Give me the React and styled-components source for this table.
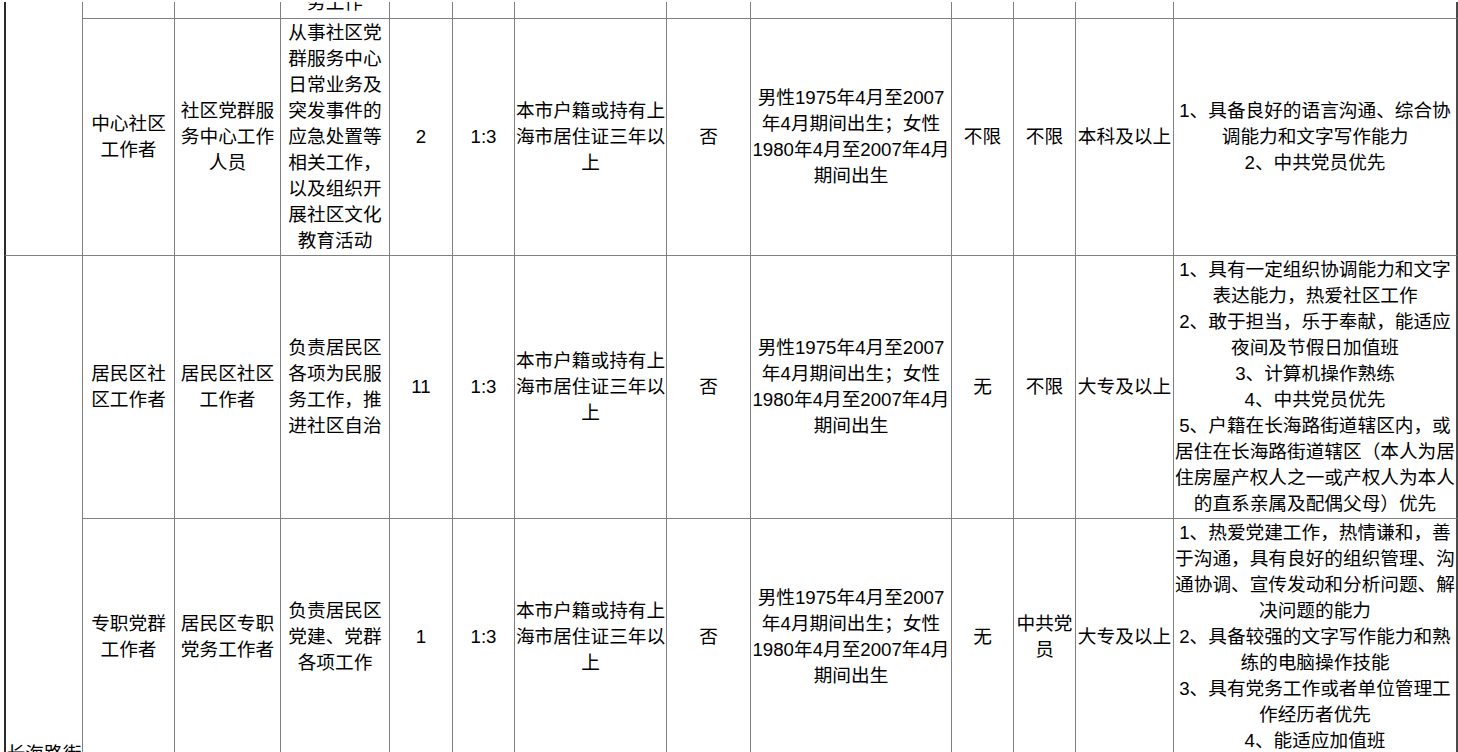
import React from 'react'
import styled, { createGlobalStyle } from 'styled-components'

const GlobalStyle = createGlobalStyle`
  html, body {
    margin: 0;
    padding: 0;
    background: #fff;
  }
  body {
    font-family: "Liberation Sans", "Noto Sans CJK SC", sans-serif;
    color: #000;
  }
`

const Viewport = styled.div`
  height: 752px;
  overflow: hidden;
  padding: 2px 0 0 4px;
  box-sizing: border-box;
`

const Table = styled.table`
  width: 1454px;
  table-layout: fixed;
  border-collapse: separate;
  border-spacing: 0;
  font-size: 14pt;
  line-height: 26px;
`

const Cell = styled.td`
  padding: ${p => (p.$flush ? '0' : '1px 0')};
  text-align: center;
  vertical-align: middle;
  border-left: ${p => (p.$first ? '2px solid #2b2b2b' : 'none')};
  border-right: ${p => (p.$last ? '2px solid #4a4a4a' : '1px solid #808080')};
  border-bottom: 1px solid #808080;
`

// the tail of the row above, scrolled almost out of view
const Clip = styled.div`
  height: 16px;
  overflow: hidden;
  display: flex;
  flex-direction: column;
  justify-content: flex-end;
  padding-bottom: 2px;
  box-sizing: border-box;
`

const FillerRow = styled.tr`
  height: 522px;
`

const Line = styled.div``

const widths = [79, 92, 106, 109, 63, 62, 152, 84, 201, 62, 62, 98, 284]

const birth = '男性1975年4月至2007年4月期间出生；女性1980年4月至2007年4月期间出生'
const hukou = '本市户籍或持有上海市居住证三年以上'

const rows = [
  {
    cells: [
      '中心社区工作者',
      '社区党群服务中心工作人员',
      '从事社区党群服务中心日常业务及突发事件的应急处置等相关工作，以及组织开展社区文化教育活动',
      '2', '1:3', hukou, '否', birth, '不限', '不限', '本科及以上',
      ['1、具备良好的语言沟通、综合协调能力和文字写作能力', '2、中共党员优先'],
    ],
  },
  {
    street: '长海路街道',
    cells: [
      '居民区社区工作者',
      '居民区社区工作者',
      '负责居民区各项为民服务工作，推进社区自治',
      '11', '1:3', hukou, '否', birth, '无', '不限', '大专及以上',
      [
        '1、具有一定组织协调能力和文字表达能力，热爱社区工作',
        '2、敢于担当，乐于奉献，能适应夜间及节假日加值班',
        '3、计算机操作熟练',
        '4、中共党员优先',
        '5、户籍在长海路街道辖区内，或居住在长海路街道辖区（本人为居住房屋产权人之一或产权人为本人的直系亲属及配偶父母）优先',
      ],
    ],
  },
  {
    cells: [
      '专职党群工作者',
      '居民区专职党务工作者',
      '负责居民区党建、党群各项工作',
      '1', '1:3', hukou, '否', birth, '无', '中共党员', '大专及以上',
      [
        '1、热爱党建工作，热情谦和，善于沟通，具有良好的组织管理、沟通协调、宣传发动和分析问题、解决问题的能力',
        '2、具备较强的文字写作能力和熟练的电脑操作技能',
        '3、具有党务工作或者单位管理工作经历者优先',
        '4、能适应加值班',
      ],
    ],
  },
]

function Content({ value }) {
  if (Array.isArray(value)) {
    return value.map((l, i) => <Line key={i}>{l}</Line>)
  }
  return value
}

export default function App() {
  return (
    <>
      <GlobalStyle />
      <Viewport>
        <Table>
          <colgroup>
            {widths.map((w, i) => <col key={i} style={{ width: w }} />)}
          </colgroup>
          <tbody>
            <tr>
              <Cell $first $flush rowSpan={2} />
              {widths.slice(1).map((_, i) => (
                <Cell key={i} $flush $last={i === widths.length - 2}>
                  {i === 2 && <Clip><Line>务工作</Line></Clip>}
                </Cell>
              ))}
            </tr>
            {rows.map((row, r) => (
              <tr key={r}>
                {row.street && <Cell $first rowSpan={3}>{row.street}</Cell>}
                {row.cells.map((c, i) => (
                  <Cell key={i} $last={i === row.cells.length - 1}>
                    <Content value={c} />
                  </Cell>
                ))}
              </tr>
            ))}
            <FillerRow>
              {widths.slice(1).map((_, i) => (
                <Cell key={i} $last={i === widths.length - 2} />
              ))}
            </FillerRow>
          </tbody>
        </Table>
      </Viewport>
    </>
  )
}
